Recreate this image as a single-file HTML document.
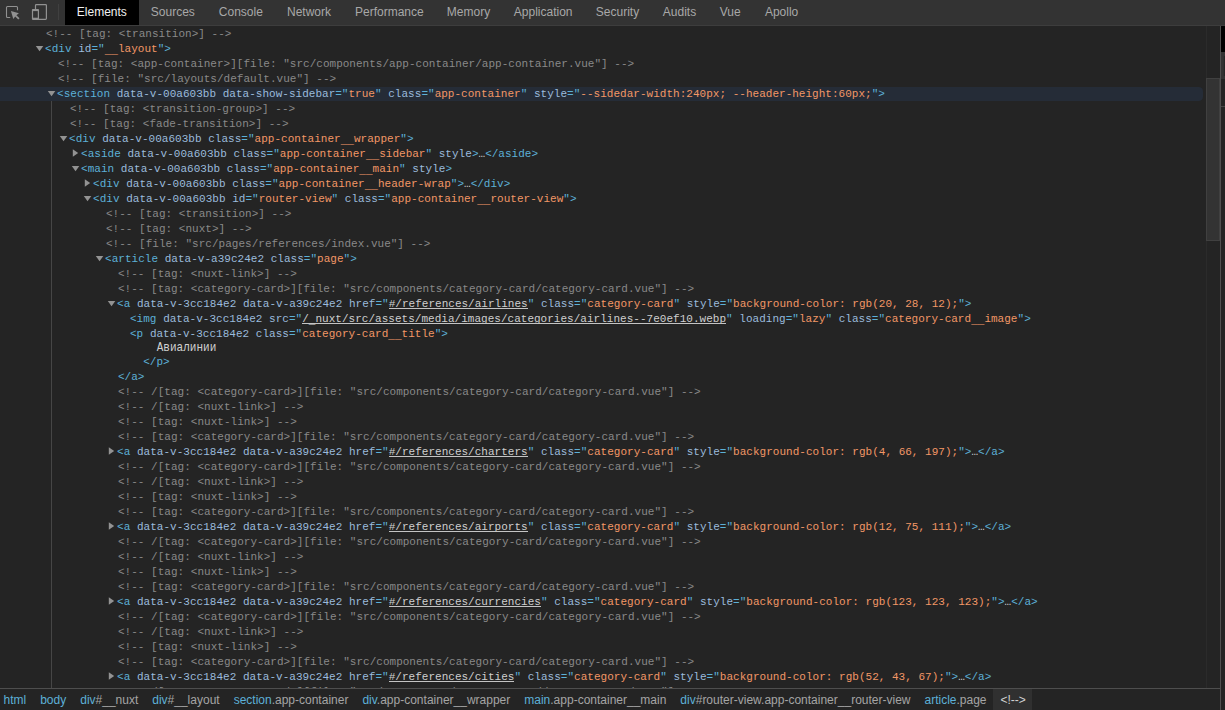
<!DOCTYPE html>
<html><head><meta charset="utf-8"><title>DevTools</title>
<style>
html,body{margin:0;padding:0}
body{width:1225px;height:710px;overflow:hidden;background:#242424;position:relative;font-family:"Liberation Sans",sans-serif;font-size:12px;color:#a5a5a5}
#bar{position:absolute;left:0;top:0;width:1225px;height:26px;background:#333333;border-bottom:1px solid #3d3d3d;box-sizing:border-box}
.tab{position:absolute;top:5px;line-height:14px;font-size:12px;color:#a8a8a8;white-space:pre}
.tab.on{color:#f0f0f0}
#tabsel{position:absolute;left:65px;top:0;width:74px;height:25px;background:#000}
#sep{position:absolute;left:58px;top:4px;width:1px;height:16px;background:#404040}
#tree{position:absolute;left:0;top:0;width:1206px;height:688px;overflow:hidden}
.ln{position:absolute;white-space:pre;font-family:"Liberation Mono",monospace;font-size:11px;line-height:15px;height:15px;letter-spacing:0.021px}
.t{color:#5db0d7}.n{color:#9bbbdc}.v{color:#f29766}.c{color:#898989}.x{color:#d0d0d0}
.l{color:#cfcfcf;position:relative}
.l i{position:absolute;left:0;right:0;top:10px;height:1px;background:#c4c4c4}
u{text-decoration:none;position:relative;top:2px}
#selrow{position:absolute;left:-6px;top:87px;width:1209px;height:14px;background:#252c37;border-radius:4.2px}
#guide{position:absolute;left:51px;top:101px;width:1px;height:587px;background:#464646}
.ad,.ar{position:absolute;display:block;fill:#939393}
#sb{position:absolute;left:1206px;top:26px;width:14px;height:662px;background:#242424;border-left:1px solid #2b2b2b;box-sizing:border-box}
#thumb{position:absolute;left:1206px;top:78px;width:14px;height:163px;background:#333;border:1px solid #404040;box-sizing:border-box}
#split{position:absolute;left:1220px;top:26px;width:1px;height:684px;background:#505050}
#rp1{position:absolute;left:1221px;top:26px;width:4px;height:26px;background:#000}
#rp2{position:absolute;left:1221px;top:52px;width:4px;height:27px;background:#333}
#rp4{position:absolute;left:1223px;top:56px;width:2px;height:20px;background:#262626;border-left:1px solid #303030;box-sizing:border-box}
#rp3{position:absolute;left:1221px;top:106px;width:4px;height:1px;background:#464646}
#crumbs{position:absolute;left:0;top:688px;width:1220px;height:22px;border-top:1px solid #4e4e4e;box-sizing:border-box;overflow:hidden}
.cr{display:block;margin-right:14px;margin-top:4px;line-height:14px;font-size:12px;color:#a5a5a5;white-space:pre}
#crflex{position:absolute;left:3.5px;top:0;display:flex}
.cr b{font-weight:normal;color:#5db0d7}
#crsel{position:absolute;left:993px;top:689px;width:39px;height:21px;background:#303030}
</style></head><body>
<div id="tree">
<div id="selrow"></div>
<div id="guide"></div>
<div class="ln" style="left:46px;top:27px"><span class="c">&lt;!-- [tag: &lt;transition&gt;] --&gt;</span></div>
<svg class="ad" width="10" height="7" style="left:35px;top:46px"><path d="M0.8 0.1H8.3L4.55 5.3Z"/></svg><div class="ln" style="left:45.1px;top:42px"><span class="t">&lt;div</span> <span class="n">id</span><span class="t">="</span><span class="v"><u>__</u>layout</span><span class="t">"</span><span class="t">&gt;</span></div>
<div class="ln" style="left:58px;top:57px"><span class="c">&lt;!-- [tag: &lt;app-container&gt;][file: "src/components/app-container/app-container.vue"] --&gt;</span></div>
<div class="ln" style="left:58px;top:72px"><span class="c">&lt;!-- [file: "src/layouts/default.vue"] --&gt;</span></div>
<svg class="ad" width="10" height="7" style="left:47px;top:91px"><path d="M0.8 0.1H8.3L4.55 5.3Z"/></svg><div class="ln" style="left:57.1px;top:87px"><span class="t">&lt;section</span> <span class="n">data-v-00a603bb</span> <span class="n">data-show-sidebar</span><span class="t">="</span><span class="v">true</span><span class="t">"</span> <span class="n">class</span><span class="t">="</span><span class="v">app-container</span><span class="t">"</span> <span class="n">style</span><span class="t">="</span><span class="v">--sidedar-width:240px; --header-height:60px;</span><span class="t">"</span><span class="t">&gt;</span></div>
<div class="ln" style="left:70px;top:102px"><span class="c">&lt;!-- [tag: &lt;transition-group&gt;] --&gt;</span></div>
<div class="ln" style="left:70px;top:117px"><span class="c">&lt;!-- [tag: &lt;fade-transition&gt;] --&gt;</span></div>
<svg class="ad" width="10" height="7" style="left:59px;top:136px"><path d="M0.8 0.1H8.3L4.55 5.3Z"/></svg><div class="ln" style="left:69.1px;top:132px"><span class="t">&lt;div</span> <span class="n">data-v-00a603bb</span> <span class="n">class</span><span class="t">="</span><span class="v">app-container<u>__</u>wrapper</span><span class="t">"</span><span class="t">&gt;</span></div>
<svg class="ar" width="8" height="9" style="left:72px;top:149px"><path d="M0.8 0.2V7.8L6.2 4Z"/></svg><div class="ln" style="left:81.1px;top:147px"><span class="t">&lt;aside</span> <span class="n">data-v-00a603bb</span> <span class="n">class</span><span class="t">="</span><span class="v">app-container<u>__</u>sidebar</span><span class="t">"</span> <span class="n">style</span><span class="t">&gt;</span><span class="x">…</span><span class="t">&lt;/aside&gt;</span></div>
<svg class="ad" width="10" height="7" style="left:71px;top:166px"><path d="M0.8 0.1H8.3L4.55 5.3Z"/></svg><div class="ln" style="left:81.1px;top:162px"><span class="t">&lt;main</span> <span class="n">data-v-00a603bb</span> <span class="n">class</span><span class="t">="</span><span class="v">app-container<u>__</u>main</span><span class="t">"</span> <span class="n">style</span><span class="t">&gt;</span></div>
<svg class="ar" width="8" height="9" style="left:84px;top:179px"><path d="M0.8 0.2V7.8L6.2 4Z"/></svg><div class="ln" style="left:93.1px;top:177px"><span class="t">&lt;div</span> <span class="n">data-v-00a603bb</span> <span class="n">class</span><span class="t">="</span><span class="v">app-container<u>__</u>header-wrap</span><span class="t">"</span><span class="t">&gt;</span><span class="x">…</span><span class="t">&lt;/div&gt;</span></div>
<svg class="ad" width="10" height="7" style="left:83px;top:196px"><path d="M0.8 0.1H8.3L4.55 5.3Z"/></svg><div class="ln" style="left:93.1px;top:192px"><span class="t">&lt;div</span> <span class="n">data-v-00a603bb</span> <span class="n">id</span><span class="t">="</span><span class="v">router-view</span><span class="t">"</span> <span class="n">class</span><span class="t">="</span><span class="v">app-container<u>__</u>router-view</span><span class="t">"</span><span class="t">&gt;</span></div>
<div class="ln" style="left:106px;top:207px"><span class="c">&lt;!-- [tag: &lt;transition&gt;] --&gt;</span></div>
<div class="ln" style="left:106px;top:222px"><span class="c">&lt;!-- [tag: &lt;nuxt&gt;] --&gt;</span></div>
<div class="ln" style="left:106px;top:237px"><span class="c">&lt;!-- [file: "src/pages/references/index.vue"] --&gt;</span></div>
<svg class="ad" width="10" height="7" style="left:95px;top:256px"><path d="M0.8 0.1H8.3L4.55 5.3Z"/></svg><div class="ln" style="left:105.1px;top:252px"><span class="t">&lt;article</span> <span class="n">data-v-a39c24e2</span> <span class="n">class</span><span class="t">="</span><span class="v">page</span><span class="t">"</span><span class="t">&gt;</span></div>
<div class="ln" style="left:118px;top:267px"><span class="c">&lt;!-- [tag: &lt;nuxt-link&gt;] --&gt;</span></div>
<div class="ln" style="left:118px;top:282px"><span class="c">&lt;!-- [tag: &lt;category-card&gt;][file: "src/components/category-card/category-card.vue"] --&gt;</span></div>
<svg class="ad" width="10" height="7" style="left:107px;top:301px"><path d="M0.8 0.1H8.3L4.55 5.3Z"/></svg><div class="ln" style="left:117.1px;top:297px"><span class="t">&lt;a</span> <span class="n">data-v-3cc184e2</span> <span class="n">data-v-a39c24e2</span> <span class="n">href</span><span class="t">="</span><span class="l">#/references/airlines<i></i></span><span class="t">"</span> <span class="n">class</span><span class="t">="</span><span class="v">category-card</span><span class="t">"</span> <span class="n">style</span><span class="t">="</span><span class="v">background-color: rgb(20, 28, 12);</span><span class="t">"</span><span class="t">&gt;</span></div>
<div class="ln" style="left:130px;top:312px"><span class="t">&lt;img</span> <span class="n">data-v-3cc184e2</span> <span class="n">src</span><span class="t">="</span><span class="l">/<u>_</u>nuxt/src/assets/media/images/categories/airlines--7e0ef10.webp<i></i></span><span class="t">"</span> <span class="n">loading</span><span class="t">="</span><span class="v">lazy</span><span class="t">"</span> <span class="n">class</span><span class="t">="</span><span class="v">category-card<u>__</u>image</span><span class="t">"</span><span class="t">&gt;</span></div>
<div class="ln" style="left:130px;top:327px"><span class="t">&lt;p</span> <span class="n">data-v-3cc184e2</span> <span class="n">class</span><span class="t">="</span><span class="v">category-card<u>__</u>title</span><span class="t">"</span><span class="t">&gt;</span></div>
<div class="ln" style="left:156.7px;top:341px;transform:scaleY(1.12);transform-origin:0 10.5px"><span class="x">Авиалинии</span></div>
<div class="ln" style="left:143.2px;top:355px"><span class="t">&lt;/p&gt;</span></div>
<div class="ln" style="left:118px;top:370px"><span class="t">&lt;/a&gt;</span></div>
<div class="ln" style="left:118px;top:385px"><span class="c">&lt;!-- /[tag: &lt;category-card&gt;][file: "src/components/category-card/category-card.vue"] --&gt;</span></div>
<div class="ln" style="left:118px;top:400px"><span class="c">&lt;!-- /[tag: &lt;nuxt-link&gt;] --&gt;</span></div>
<div class="ln" style="left:118px;top:415px"><span class="c">&lt;!-- [tag: &lt;nuxt-link&gt;] --&gt;</span></div>
<div class="ln" style="left:118px;top:430px"><span class="c">&lt;!-- [tag: &lt;category-card&gt;][file: "src/components/category-card/category-card.vue"] --&gt;</span></div>
<svg class="ar" width="8" height="9" style="left:108px;top:447px"><path d="M0.8 0.2V7.8L6.2 4Z"/></svg><div class="ln" style="left:117.1px;top:445px"><span class="t">&lt;a</span> <span class="n">data-v-3cc184e2</span> <span class="n">data-v-a39c24e2</span> <span class="n">href</span><span class="t">="</span><span class="l">#/references/charters<i></i></span><span class="t">"</span> <span class="n">class</span><span class="t">="</span><span class="v">category-card</span><span class="t">"</span> <span class="n">style</span><span class="t">="</span><span class="v">background-color: rgb(4, 66, 197);</span><span class="t">"</span><span class="t">&gt;</span><span class="x">…</span><span class="t">&lt;/a&gt;</span></div>
<div class="ln" style="left:118px;top:460px"><span class="c">&lt;!-- /[tag: &lt;category-card&gt;][file: "src/components/category-card/category-card.vue"] --&gt;</span></div>
<div class="ln" style="left:118px;top:475px"><span class="c">&lt;!-- /[tag: &lt;nuxt-link&gt;] --&gt;</span></div>
<div class="ln" style="left:118px;top:490px"><span class="c">&lt;!-- [tag: &lt;nuxt-link&gt;] --&gt;</span></div>
<div class="ln" style="left:118px;top:505px"><span class="c">&lt;!-- [tag: &lt;category-card&gt;][file: "src/components/category-card/category-card.vue"] --&gt;</span></div>
<svg class="ar" width="8" height="9" style="left:108px;top:522px"><path d="M0.8 0.2V7.8L6.2 4Z"/></svg><div class="ln" style="left:117.1px;top:520px"><span class="t">&lt;a</span> <span class="n">data-v-3cc184e2</span> <span class="n">data-v-a39c24e2</span> <span class="n">href</span><span class="t">="</span><span class="l">#/references/airports<i></i></span><span class="t">"</span> <span class="n">class</span><span class="t">="</span><span class="v">category-card</span><span class="t">"</span> <span class="n">style</span><span class="t">="</span><span class="v">background-color: rgb(12, 75, 111);</span><span class="t">"</span><span class="t">&gt;</span><span class="x">…</span><span class="t">&lt;/a&gt;</span></div>
<div class="ln" style="left:118px;top:535px"><span class="c">&lt;!-- /[tag: &lt;category-card&gt;][file: "src/components/category-card/category-card.vue"] --&gt;</span></div>
<div class="ln" style="left:118px;top:550px"><span class="c">&lt;!-- /[tag: &lt;nuxt-link&gt;] --&gt;</span></div>
<div class="ln" style="left:118px;top:565px"><span class="c">&lt;!-- [tag: &lt;nuxt-link&gt;] --&gt;</span></div>
<div class="ln" style="left:118px;top:580px"><span class="c">&lt;!-- [tag: &lt;category-card&gt;][file: "src/components/category-card/category-card.vue"] --&gt;</span></div>
<svg class="ar" width="8" height="9" style="left:108px;top:597px"><path d="M0.8 0.2V7.8L6.2 4Z"/></svg><div class="ln" style="left:117.1px;top:595px"><span class="t">&lt;a</span> <span class="n">data-v-3cc184e2</span> <span class="n">data-v-a39c24e2</span> <span class="n">href</span><span class="t">="</span><span class="l">#/references/currencies<i></i></span><span class="t">"</span> <span class="n">class</span><span class="t">="</span><span class="v">category-card</span><span class="t">"</span> <span class="n">style</span><span class="t">="</span><span class="v">background-color: rgb(123, 123, 123);</span><span class="t">"</span><span class="t">&gt;</span><span class="x">…</span><span class="t">&lt;/a&gt;</span></div>
<div class="ln" style="left:118px;top:610px"><span class="c">&lt;!-- /[tag: &lt;category-card&gt;][file: "src/components/category-card/category-card.vue"] --&gt;</span></div>
<div class="ln" style="left:118px;top:625px"><span class="c">&lt;!-- /[tag: &lt;nuxt-link&gt;] --&gt;</span></div>
<div class="ln" style="left:118px;top:640px"><span class="c">&lt;!-- [tag: &lt;nuxt-link&gt;] --&gt;</span></div>
<div class="ln" style="left:118px;top:655px"><span class="c">&lt;!-- [tag: &lt;category-card&gt;][file: "src/components/category-card/category-card.vue"] --&gt;</span></div>
<svg class="ar" width="8" height="9" style="left:108px;top:672px"><path d="M0.8 0.2V7.8L6.2 4Z"/></svg><div class="ln" style="left:117.1px;top:670px"><span class="t">&lt;a</span> <span class="n">data-v-3cc184e2</span> <span class="n">data-v-a39c24e2</span> <span class="n">href</span><span class="t">="</span><span class="l">#/references/cities<i></i></span><span class="t">"</span> <span class="n">class</span><span class="t">="</span><span class="v">category-card</span><span class="t">"</span> <span class="n">style</span><span class="t">="</span><span class="v">background-color: rgb(52, 43, 67);</span><span class="t">"</span><span class="t">&gt;</span><span class="x">…</span><span class="t">&lt;/a&gt;</span></div>
<div class="ln" style="left:118px;top:685px"><span class="c">&lt;!-- /[tag: &lt;category-card&gt;][file: "src/components/category-card/category-card.vue"] --&gt;</span></div>
</div>
<div id="bar"><svg id="ico" width="60" height="26" viewBox="0 0 60 26" style="position:absolute;left:0;top:0">
<path d="M17.5 10.2V7.5a1 1 0 0 0-1-1H7.5a1 1 0 0 0-1 1v9a1 1 0 0 0 1 1H10.2" fill="none" stroke="#919191" stroke-width="1.1"/>
<path d="M10.9 10.9L18.9 13.3L16.4 15.2L19.5 18.3L18.3 19.5L15.2 16.4L13.3 18.9Z" fill="#919191"/>
<rect x="35.5" y="4.6" width="10.9" height="14.8" rx="0.8" fill="none" stroke="#919191" stroke-width="1.2"/>
<rect x="31.9" y="9.1" width="7.1" height="10.8" rx="0.8" fill="#919191"/>
<rect x="33.1" y="11.1" width="4.7" height="6.6" fill="#333"/>
</svg><div id="sep"></div><div id="tabsel"></div><span class="tab on" style="left:76.8px">Elements</span><span class="tab" style="left:150.8px">Sources</span><span class="tab" style="left:218.8px">Console</span><span class="tab" style="left:287.0px">Network</span><span class="tab" style="left:355.0px">Performance</span><span class="tab" style="left:446.8px">Memory</span><span class="tab" style="left:513.8px">Application</span><span class="tab" style="left:595.8px">Security</span><span class="tab" style="left:662.8px">Audits</span><span class="tab" style="left:719.8px">Vue</span><span class="tab" style="left:764.9px">Apollo</span></div>
<div id="sb"></div><div id="thumb"></div><div id="split"></div><div id="rp1"></div><div id="rp2"></div><div id="rp4"></div><div id="rp3"></div>
<div id="crsel"></div><div id="crumbs"><div id="crflex"><span class="cr"><b>html</b></span><span class="cr"><b>body</b></span><span class="cr"><b>div</b>#__nuxt</span><span class="cr"><b>div</b>#__layout</span><span class="cr"><b>section</b>.app-container</span><span class="cr"><b>div</b>.app-container__wrapper</span><span class="cr"><b>main</b>.app-container__main</span><span class="cr"><b>div</b>#router-view.app-container__router-view</span><span class="cr"><b>article</b>.page</span><span class="cr" style="color:#d0d0d0">&lt;!--&gt;</span></div></div>

</body></html>
